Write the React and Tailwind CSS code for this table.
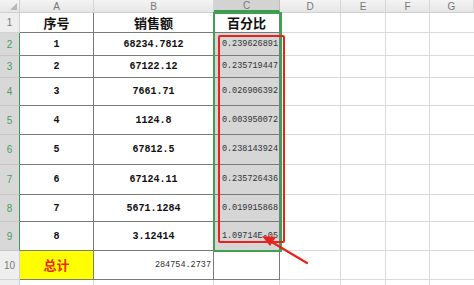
import React from 'react';

const cols = ['A', 'B', 'C', 'D', 'E', 'F', 'G'];

const rows = [
  { n: 1, a: '序号', b: '销售额', c: '百分比', h: 'h-[20px]', head: true },
  { n: 2, a: '1', b: '68234.7812', c: '0.239626891', h: 'h-[23px]' },
  { n: 3, a: '2', b: '67122.12', c: '0.235719447', h: 'h-[22px]' },
  { n: 4, a: '3', b: '7661.71', c: '0.026906392', h: 'h-[28px]' },
  { n: 5, a: '4', b: '1124.8', c: '0.003950072', h: 'h-[29px]' },
  { n: 6, a: '5', b: '67812.5', c: '0.238143924', h: 'h-[30px]' },
  { n: 7, a: '6', b: '67124.11', c: '0.235726436', h: 'h-[30px]' },
  { n: 8, a: '7', b: '5671.1284', c: '0.019915868', h: 'h-[27px]' },
  { n: 9, a: '8', b: '3.12414', c: '1.09714E-05', h: 'h-[29px]' },
  { n: 10, a: '总计', b: '284754.2737', c: '', h: 'h-[29px]', total: true },
  { n: 11, a: '', b: '', c: '', h: 'h-[20px]', empty: true },
];

const cjk = "font-['Noto_Sans_CJK_SC',sans-serif]";
const mono = "font-['Liberation_Mono','Noto_Sans_CJK_SC',monospace]";

function Row({ r }) {
  const sel = r.n >= 2 && r.n <= 9;
  const dark = r.empty ? 'border-[#dadada]' : 'border-[#7a7a7a]';
  return (
    <div className={`flex ${r.h}`}>
      <div
        className={`w-[20px] shrink-0 flex items-center justify-center border-b text-[10px] font-['Liberation_Sans',sans-serif] ${
          sel
            ? 'bg-[#d8d8d8] text-[#4f9a62] border-r border-r-[#3d9a50] border-b-[#c6c6c6]'
            : 'bg-[#eeeeee] text-[#7a7a7a] border-r border-r-[#cfcfcf] border-b-[#d4d4d4]'
        }`}
      >
        {r.n}
      </div>
      <div
        className={`w-[74px] shrink-0 flex items-center justify-center border-r border-b ${dark} ${
          r.total ? 'bg-[#ffff00] text-[#f02a0a]' : 'text-[#111]'
        } ${r.head || r.total ? `${cjk} text-[13px] font-bold` : `${mono} text-[10px] font-bold`}`}
      >
        {r.a}
      </div>
      <div
        className={`w-[120px] shrink-0 flex items-center border-r border-b ${dark} text-[#111] ${
          r.head
            ? `${cjk} justify-center text-[13px] font-bold`
            : r.total
            ? `${mono} justify-end pr-[2px] text-[8.5px] text-[#333]`
            : `${mono} justify-center text-[10px] font-bold`
        }`}
      >
        {r.b}
      </div>
      <div
        className={`w-[66px] shrink-0 flex items-center border-r border-b ${dark} ${
          sel ? 'bg-[#d6d6d6]' : ''
        } ${
          r.head
            ? `${cjk} justify-center text-[13px] font-bold text-[#111]`
            : `${mono} justify-end pr-[1px] text-[8.5px] text-[#333]`
        }`}
      >
        {r.c}
      </div>
      <div className="w-[61px] shrink-0 border-r border-b border-[#dadada]" />
      <div className="w-[45px] shrink-0 border-r border-b border-[#dadada]" />
      <div className="w-[44px] shrink-0 border-r border-b border-[#dadada]" />
      <div className="flex-1 border-b border-[#dadada]" />
    </div>
  );
}

export default function App() {
  const widths = ['w-[74px]', 'w-[120px]', 'w-[66px]', 'w-[61px]', 'w-[45px]', 'w-[44px]', 'flex-1'];
  return (
    <div className="relative w-[474px] h-[285px] overflow-hidden bg-white">
      <div className="flex h-[13px] bg-gradient-to-b from-[#f4f4f4] to-[#e6e6e6] border-b border-[#cfcfcf]">
        <div className="relative w-[20px] shrink-0 border-r border-[#cfcfcf]">
          <div className="absolute right-[2px] bottom-[2px] w-0 h-0 border-l-[7px] border-l-transparent border-b-[7px] border-b-[#b8b8b8]" />
        </div>
        {cols.map((c, i) => (
          <div
            key={c}
            className={`${widths[i]} shrink-0 flex items-center justify-center text-[10px] font-['Liberation_Sans',sans-serif] text-[#777] ${
              c === 'C' ? 'bg-[#d3d3d3] border-b-2 border-b-[#3d9a50] border-r border-r-[#bdbdbd]' : 'border-r border-[#d6d6d6]'
            }`}
          >
            {c}
          </div>
        ))}
      </div>
      {rows.map((r) => (
        <Row key={r.n} r={r} />
      ))}

      {/* selection outline */}
      <div className="absolute left-[213px] top-[12px] w-[69px] h-[240px] border-2 border-[#3fa14f] pointer-events-none" />
      {/* red highlight box */}
      <div className="absolute left-[218px] top-[35px] w-[67px] h-[208px] border-2 border-[#e8231d] rounded-[2px] pointer-events-none" />
      {/* arrow */}
      <svg className="absolute left-0 top-0 pointer-events-none" width="474" height="285" viewBox="0 0 474 285">
        <line x1="307" y1="263" x2="270" y2="241" stroke="#e8231d" strokeWidth="2.2" strokeLinecap="round" />
        <polygon points="262,236 276,237 270,246" fill="#e8231d" />
      </svg>
    </div>
  );
}
